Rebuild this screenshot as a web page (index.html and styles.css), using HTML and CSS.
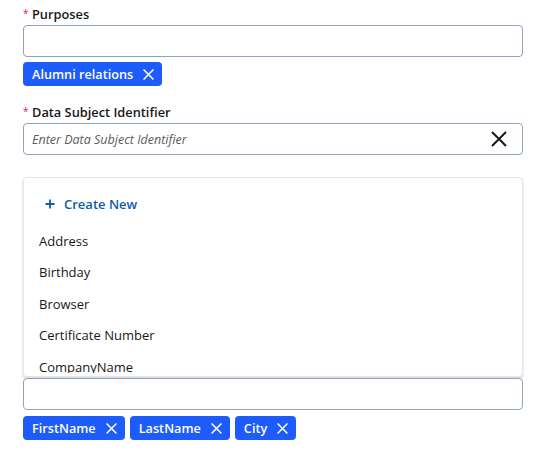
FILE: index.html
```html
<!DOCTYPE html>
<html>
<head>
<meta charset="utf-8">
<link rel="stylesheet" href="styles.css">
</head>
<body>
<div class="form">
  <div class="field">
    <label class="label"><abbr class="req">*</abbr>Purposes</label>
    <div class="input"></div>
    <div class="pills">
      <span class="pill">Alumni relations<svg class="px" viewBox="0 0 10 10"><path d="M0.5 0.5L9.5 9.5M9.5 0.5L0.5 9.5"/></svg></span>
    </div>
  </div>
  <div class="field field2">
    <label class="label"><abbr class="req">*</abbr>Data Subject Identifier</label>
    <div class="input search">
      <span class="ph">Enter Data Subject Identifier</span>
      <svg class="clear" viewBox="0 0 16 16"><path d="M1 1L15 15M15 1L1 15"/></svg>
    </div>
    <div class="dropdown">
      <div class="scroll">
        <div class="create"><svg class="plus" viewBox="0 0 10 10"><path d="M5 0.5V9.5M0.5 5H9.5"/></svg>Create New</div>
        <ul class="list">
          <li>Address</li>
          <li>Birthday</li>
          <li>Browser</li>
          <li>Certificate Number</li>
          <li>CompanyName</li>
        </ul>
      </div>
    </div>
    <div class="input"></div>
    <div class="pills pills2">
      <span class="pill">FirstName<svg class="px" viewBox="0 0 10 10"><path d="M0.5 0.5L9.5 9.5M9.5 0.5L0.5 9.5"/></svg></span>
      <span class="pill">LastName<svg class="px" viewBox="0 0 10 10"><path d="M0.5 0.5L9.5 9.5M9.5 0.5L0.5 9.5"/></svg></span>
      <span class="pill">City<svg class="px" viewBox="0 0 10 10"><path d="M0.5 0.5L9.5 9.5M9.5 0.5L0.5 9.5"/></svg></span>
    </div>
  </div>
</div>
</body>
</html>
```
FILE: styles.css
```css
* { box-sizing: border-box; }
html, body { margin: 0; padding: 0; background: #fff; }
body {
  font-family: "Open Sans", Lato, "Liberation Sans", sans-serif;
  color: #181818;
  font-size: 13px;
}
.form {
  padding: 5px 25px 0 23px;
  width: 548px;
}
.field { display: flex; flex-direction: column; }
.field2 { margin-top: 17px; }
.label {
  display: flex;
  align-items: center;
  height: 18px;
  font-weight: 600;
  font-size: 12.8px;
  margin-bottom: 2px;
}
.req {
  color: #d7263d;
  text-decoration: none;
  font-weight: 400;
  width: 9px;
  font-size: 10px;
  line-height: 10px;
  align-self: flex-start;
  margin-top: 3px;
}
.input {
  height: 32px;
  width: 500px;
  border: 1px solid #8ea3bf;
  border-radius: 4px;
  background: #fff;
}
.search {
  display: flex;
  align-items: center;
  justify-content: space-between;
  padding: 0 15px 0 8px;
}
.ph {
  font-style: italic;
  color: #5c5c5c;
  font-size: 12.5px;
}
.clear { width: 16px; height: 16px; }
.clear path { stroke: #181818; stroke-width: 2; fill: none; }
.pills { display: flex; gap: 5px; margin-top: 5px; }
.pills2 { margin-top: 6px; }
.pill {
  display: inline-flex;
  align-items: center;
  height: 24px;
  padding: 0 8px 0 9px;
  background: #1d5cfb;
  color: #fff;
  border-radius: 4px;
  font-weight: 600;
  font-size: 12.7px;
}
.px { width: 11px; height: 11px; margin-left: 10px; }
.px path { stroke: #fff; stroke-width: 1.4; fill: none; }
.dropdown {
  margin-top: 22px;
  width: 500px;
  height: 200px;
  border: 1px solid #e5e5e5;
  border-radius: 4px;
  box-shadow: 0 2px 3px rgba(0,0,0,0.16);
  padding: 7px 0 3px;
  margin-bottom: 1px;
  background: #fff;
  display: flex;
  flex-direction: column;
}
.scroll {
  flex: 1;
  min-height: 0;
  overflow: hidden;
}
.create {
  display: flex;
  align-items: center;
  height: 38px;
  padding-left: 21px;
  color: #0b5cab;
  font-weight: 600;
  font-size: 13px;
}
.plus { width: 10px; height: 10px; margin-right: 9px; }
.plus path { stroke: #0b5cab; stroke-width: 1.8; fill: none; }
.list { list-style: none; margin: 2px 0 0; padding: 0; }
.list li {
  height: 31.5px;
  display: flex;
  align-items: center;
  padding-left: 15px;
  font-size: 13px;
}
```
